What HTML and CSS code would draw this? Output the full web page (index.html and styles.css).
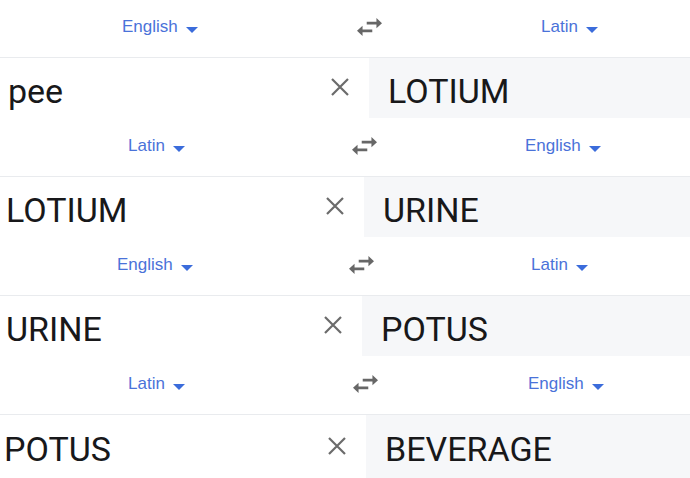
FILE: index.html
```html
<!DOCTYPE html>
<html>
<head>
<meta charset="utf-8">
<link rel="stylesheet" href="styles.css">
</head>
<body>
<div class="panel p1">
  <div class="bar">
    <span class="lang">English<i class="caret"></i></span>
    <svg class="swap" viewBox="3 5 18 14" preserveAspectRatio="none"><path d="M6.99 11L3 15l3.99 4v-3H14v-2H6.99v-3zM21 9l-4-4v3H10v2h7v3l4-4z"/></svg>
    <span class="lang">Latin<i class="caret"></i></span>
  </div>
  <div class="body">
    <div class="src"><span class="txt">pee</span><svg class="clear" viewBox="0 0 18 18"><path d="M1 1L17 17M17 1L1 17"/></svg></div>
    <div class="dst"><span class="txt">LOTIUM</span></div>
  </div>
</div>
<div class="panel p2">
  <div class="bar">
    <span class="lang">Latin<i class="caret"></i></span>
    <svg class="swap" viewBox="3 5 18 14" preserveAspectRatio="none"><path d="M6.99 11L3 15l3.99 4v-3H14v-2H6.99v-3zM21 9l-4-4v3H10v2h7v3l4-4z"/></svg>
    <span class="lang">English<i class="caret"></i></span>
  </div>
  <div class="body">
    <div class="src"><span class="txt">LOTIUM</span><svg class="clear" viewBox="0 0 18 18"><path d="M1 1L17 17M17 1L1 17"/></svg></div>
    <div class="dst"><span class="txt">URINE</span></div>
  </div>
</div>
<div class="panel p3">
  <div class="bar">
    <span class="lang">English<i class="caret"></i></span>
    <svg class="swap" viewBox="3 5 18 14" preserveAspectRatio="none"><path d="M6.99 11L3 15l3.99 4v-3H14v-2H6.99v-3zM21 9l-4-4v3H10v2h7v3l4-4z"/></svg>
    <span class="lang">Latin<i class="caret"></i></span>
  </div>
  <div class="body">
    <div class="src"><span class="txt">URINE</span><svg class="clear" viewBox="0 0 18 18"><path d="M1 1L17 17M17 1L1 17"/></svg></div>
    <div class="dst"><span class="txt">POTUS</span></div>
  </div>
</div>
<div class="panel p4">
  <div class="bar">
    <span class="lang">Latin<i class="caret"></i></span>
    <svg class="swap" viewBox="3 5 18 14" preserveAspectRatio="none"><path d="M6.99 11L3 15l3.99 4v-3H14v-2H6.99v-3zM21 9l-4-4v3H10v2h7v3l4-4z"/></svg>
    <span class="lang">English<i class="caret"></i></span>
  </div>
  <div class="body">
    <div class="src"><span class="txt">POTUS</span><svg class="clear" viewBox="0 0 18 18"><path d="M1 1L17 17M17 1L1 17"/></svg></div>
    <div class="dst"><span class="txt">BEVERAGE</span></div>
  </div>
</div>
</body>
</html>
```

FILE: styles.css
```css
html, body {
  margin: 0;
  padding: 0;
  background: #fff;
}
body {
  width: 690px;
  height: 478px;
  overflow: hidden;
}
.panel {
  --div: 369px;
  --l1: 122px;
  --sw: 357px;
  --l2: 541px;
  --tl: 8px;
}
.p1 { --div: 369px; --l1: 122px; --sw: 357px; --l2: 541px; --tl: 8px; }
.p2 { --div: 364px; --l1: 128px; --sw: 352px; --l2: 525px; --tl: 6px; }
.p3 { --div: 362px; --l1: 117px; --sw: 349px; --l2: 531px; --tl: 6px; }
.p4 { --div: 366px; --l1: 128px; --sw: 353px; --l2: 528px; --tl: 4px; }

.bar {
  display: grid;
  grid-template-columns: var(--l1) calc(var(--sw) - var(--l1)) calc(var(--l2) - var(--sw)) 1fr;
  align-items: center;
  height: 53px;
  padding-bottom: 4px;
  border-bottom: 1px solid #e9ebee;
}
.bar > :first-child {
  grid-column-start: 2;
}
.lang {
  display: flex;
  align-items: center;
  font: 17px "Liberation Sans", Arial, sans-serif;
  color: #4a72d9;
  white-space: nowrap;
}
.caret {
  width: 0;
  height: 0;
  border-left: 6px solid transparent;
  border-right: 6px solid transparent;
  border-top: 6px solid #3b6cdb;
  margin-left: 8px;
  margin-top: 6px;
}
.swap {
  width: 25px;
  height: 18px;
  fill: #676767;
  display: block;
}
.body {
  display: grid;
  grid-template-columns: var(--div) 1fr;
  height: 60px;
  margin-bottom: 1px;
}
.p4 .body {
  height: 63px;
  margin-bottom: 0;
}
.src {
  display: flex;
  align-items: center;
  justify-content: space-between;
  padding: 0 20px 0 var(--tl);
  background: #fff;
}
.dst {
  display: flex;
  align-items: center;
  padding-left: 19px;
  background: #f6f7f9;
}
.txt {
  font: 34px/40px Roboto, "Noto Sans", sans-serif;
  color: #18181a;
  padding-top: 5px;
  white-space: nowrap;
}
.clear {
  width: 18px;
  height: 18px;
  display: block;
  fill: none;
  stroke: #6b6b6b;
  stroke-width: 2.2;
  margin-top: -2px;
}
```
